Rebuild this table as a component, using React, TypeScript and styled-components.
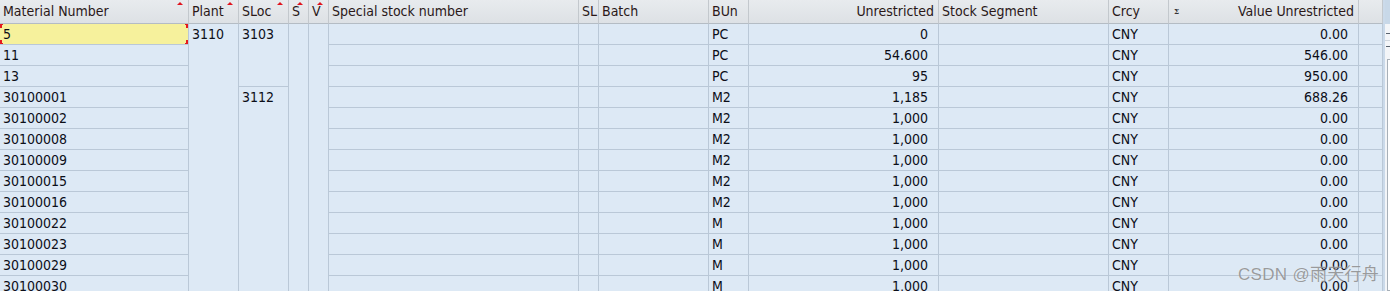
import React from "react";
import styled, { createGlobalStyle } from "styled-components";

const Global = createGlobalStyle`
  html, body { margin: 0; padding: 0; background: #ffffff; overflow: hidden; }
  body { width: 1390px; height: 291px; }
`;

const FONT = `"DejaVu Sans Condensed", "DejaVu Sans", "Liberation Sans", sans-serif`;

const Screen = styled.div`
  position: relative;
  width: 1390px;
  height: 291px;
  overflow: hidden;
  display: flex;
  font-family: ${FONT};
  font-stretch: condensed;
  font-size: 14px;
`;

const Grid = styled.div`
  display: grid;
  grid-template-columns: 189px 50px 50px 20px 20px 250px 20px 110px 40px 190px 170px 60px 190px 24px;
  grid-template-rows: 24px;
  grid-auto-rows: 21px;
  background: #dde9f5;
  flex: none;
  height: 291px;
  overflow: hidden;
`;

const HeadCell = styled.div<{ $align?: "left" | "right" }>`
  position: relative;
  box-sizing: border-box;
  height: 24px;
  padding: 0 ${(p) => (p.$align === "right" ? "4px" : "0")} 0 3px;
  border-right: 1px solid #c3c8cd;
  border-bottom: 1px solid #b4bcc4;
  background: linear-gradient(#e8ebee, #dde1e5);
  color: #2a1818;
  line-height: 23px;
  white-space: nowrap;
  overflow: hidden;
  text-align: ${(p) => p.$align ?? "left"};
`;

const SortMark = styled.span`
  position: absolute;
  top: 2px;
  right: 5px;
  width: 0;
  height: 0;
  border-left: 3px solid transparent;
  border-right: 3px solid transparent;
  border-bottom: 3px solid #e0141e;
`;

const SigmaMark = styled.span`
  position: absolute;
  left: 5px;
  top: 0;
  font-family: "DejaVu Serif", serif;
  font-size: 8px;
  font-weight: bold;
  color: #333;
  line-height: 23px;
`;

const Cell = styled.div<{
  $align?: "left" | "right";
  $selected?: boolean;
  $col?: number;
  $row?: number;
  $span?: number;
}>`
  position: relative;
  box-sizing: border-box;
  border-right: 1px solid #bac8d7;
  border-bottom: 1px solid #bac8d7;
  padding: 0 ${(p) => (p.$align === "right" ? "10px" : "0")} 0 3px;
  background: ${(p) => (p.$selected ? "#f6f19c" : "transparent")};
  color: #0c0e18;
  line-height: 20px;
  white-space: nowrap;
  overflow: hidden;
  text-align: ${(p) => p.$align ?? "left"};
  ${(p) => (p.$col ? `grid-column: ${p.$col};` : "")}
  ${(p) => (p.$row ? `grid-row: ${p.$row} / span ${p.$span ?? 1};` : "")}
`;

const Corner = styled.span<{ $v: "top" | "bottom"; $h: "left" | "right" }>`
  position: absolute;
  ${(p) => p.$v}: 0;
  ${(p) => p.$h}: 0;
  width: 3px;
  height: 4px;
  border-${(p) => p.$v}: 1px solid #e3191f;
  border-${(p) => p.$h}: 2px solid #e3191f;
  box-sizing: border-box;
`;

const SideStrip = styled.div`
  flex: 1;
  display: flex;
  flex-direction: column;
  border-left: 2px solid #cbdaea;
  background: #f3f5f8;
`;

const SideHead = styled.div`
  height: 24px;
  background: #c8d8e8;
  flex: none;
`;

const SideTick = styled.div<{ $gap: number }>`
  margin: ${(p) => p.$gap}px 0 0 1px;
  height: 1px;
  width: 5px;
  background: #5a6470;
  flex: none;
`;

const SideRule = styled.div`
  margin: 6px 0 0 0;
  height: 1px;
  background: #d0d6dc;
  flex: none;
`;

const SideBox = styled.div`
  margin: 12px 0 0 2px;
  flex: 1;
  border: 1px solid #a8b0b8;
  border-right: none;
  background: #ffffff;
`;

const Watermark = styled.div`
  position: absolute;
  left: 1238px;
  top: 260px;
  font-family: "Liberation Sans", "Noto Sans CJK SC", sans-serif;
  font-size: 17px;
  color: rgba(125, 125, 125, 0.75);
  text-shadow: 0 0 1px rgba(255, 255, 255, 0.6);
  white-space: nowrap;
  letter-spacing: 0.3px;
`;

type Row = { mat: string; bun: string; unr: string; val: string };

const rows: Row[] = [
  { mat: "5", bun: "PC", unr: "0", val: "0.00" },
  { mat: "11", bun: "PC", unr: "54.600", val: "546.00" },
  { mat: "13", bun: "PC", unr: "95", val: "950.00" },
  { mat: "30100001", bun: "M2", unr: "1,185", val: "688.26" },
  { mat: "30100002", bun: "M2", unr: "1,000", val: "0.00" },
  { mat: "30100008", bun: "M2", unr: "1,000", val: "0.00" },
  { mat: "30100009", bun: "M2", unr: "1,000", val: "0.00" },
  { mat: "30100015", bun: "M2", unr: "1,000", val: "0.00" },
  { mat: "30100016", bun: "M2", unr: "1,000", val: "0.00" },
  { mat: "30100022", bun: "M", unr: "1,000", val: "0.00" },
  { mat: "30100023", bun: "M", unr: "1,000", val: "0.00" },
  { mat: "30100029", bun: "M", unr: "1,000", val: "0.00" },
  { mat: "30100030", bun: "M", unr: "1,000", val: "0.00" },
];

const headers: { label: string; align?: "left" | "right"; sort?: boolean; sigma?: boolean }[] = [
  { label: "Material Number", sort: true },
  { label: "Plant", sort: true },
  { label: "SLoc", sort: true },
  { label: "S", sort: true },
  { label: "V", sort: true },
  { label: "Special stock number" },
  { label: "SL" },
  { label: "Batch" },
  { label: "BUn" },
  { label: "Unrestricted", align: "right" },
  { label: "Stock Segment" },
  { label: "Crcy" },
  { label: "Value Unrestricted", align: "right", sigma: true },
  { label: "" },
];

export default function App() {
  const n = rows.length;
  return (
    <>
      <Global />
      <Screen>
        <Grid>
          {headers.map((h, i) => (
            <HeadCell key={"h" + i} $align={h.align}>
              {h.sigma && <SigmaMark>Σ</SigmaMark>}
              {h.label}
              {h.sort && <SortMark />}
            </HeadCell>
          ))}
          <Cell $col={2} $row={2} $span={n}>3110</Cell>
          <Cell $col={3} $row={2} $span={3}>3103</Cell>
          <Cell $col={3} $row={5} $span={n - 3}>3112</Cell>
          <Cell $col={4} $row={2} $span={n} />
          <Cell $col={5} $row={2} $span={n} />
          {rows.map((r, i) => (
            <React.Fragment key={r.mat}>
              <Cell $col={1} $selected={i === 0}>
                {r.mat}
                {i === 0 && (
                  <>
                    <Corner $v="top" $h="left" />
                    <Corner $v="bottom" $h="left" />
                    <Corner $v="top" $h="right" />
                    <Corner $v="bottom" $h="right" />
                  </>
                )}
              </Cell>
              <Cell $col={6} />
              <Cell $col={7} />
              <Cell $col={8} />
              <Cell $col={9}>{r.bun}</Cell>
              <Cell $col={10} $align="right">{r.unr}</Cell>
              <Cell $col={11} />
              <Cell $col={12}>CNY</Cell>
              <Cell $col={13} $align="right">{r.val}</Cell>
              <Cell $col={14} />
            </React.Fragment>
          ))}
        </Grid>
        <SideStrip>
          <SideHead />
          <SideTick $gap={9} />
          <SideRule />
          <SideTick $gap={5} />
          <SideBox />
        </SideStrip>
        <Watermark>CSDN @雨天行舟</Watermark>
      </Screen>
    </>
  );
}
